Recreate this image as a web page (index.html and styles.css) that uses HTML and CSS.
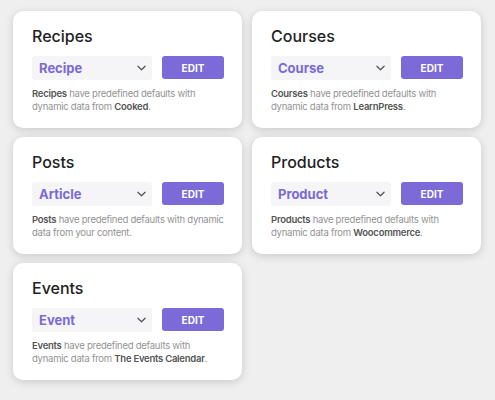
FILE: index.html
```html
<!DOCTYPE html>
<html>
<head>
<meta charset="utf-8">
<link rel="stylesheet" href="styles.css">
</head>
<body>
<div class="grid">
  <div class="card">
    <h2 class="title">Recipes</h2>
    <div class="controls">
      <div class="select"><span>Recipe</span><svg class="chev" viewBox="0 0 10 6" width="9" height="6"><path d="M1 1l4 4 4-4" fill="none" stroke="#555" stroke-width="1.4" stroke-linecap="round" stroke-linejoin="round"/></svg></div>
      <button class="edit">EDIT</button>
    </div>
    <p class="desc"><b>Recipes</b> have predefined defaults with<br>dynamic data from <b>Cooked</b>.</p>
  </div>
  <div class="card">
    <h2 class="title">Courses</h2>
    <div class="controls">
      <div class="select"><span>Course</span><svg class="chev" viewBox="0 0 10 6" width="9" height="6"><path d="M1 1l4 4 4-4" fill="none" stroke="#555" stroke-width="1.4" stroke-linecap="round" stroke-linejoin="round"/></svg></div>
      <button class="edit">EDIT</button>
    </div>
    <p class="desc"><b>Courses</b> have predefined defaults with<br>dynamic data from <b>LearnPress</b>.</p>
  </div>
  <div class="card">
    <h2 class="title">Posts</h2>
    <div class="controls">
      <div class="select"><span>Article</span><svg class="chev" viewBox="0 0 10 6" width="9" height="6"><path d="M1 1l4 4 4-4" fill="none" stroke="#555" stroke-width="1.4" stroke-linecap="round" stroke-linejoin="round"/></svg></div>
      <button class="edit">EDIT</button>
    </div>
    <p class="desc"><b>Posts</b> have predefined defaults with dynamic<br>data from your content.</p>
  </div>
  <div class="card">
    <h2 class="title">Products</h2>
    <div class="controls">
      <div class="select"><span>Product</span><svg class="chev" viewBox="0 0 10 6" width="9" height="6"><path d="M1 1l4 4 4-4" fill="none" stroke="#555" stroke-width="1.4" stroke-linecap="round" stroke-linejoin="round"/></svg></div>
      <button class="edit">EDIT</button>
    </div>
    <p class="desc"><b>Products</b> have predefined defaults with<br>dynamic data from <b>Woocommerce</b>.</p>
  </div>
  <div class="card">
    <h2 class="title">Events</h2>
    <div class="controls">
      <div class="select"><span>Event</span><svg class="chev" viewBox="0 0 10 6" width="9" height="6"><path d="M1 1l4 4 4-4" fill="none" stroke="#555" stroke-width="1.4" stroke-linecap="round" stroke-linejoin="round"/></svg></div>
      <button class="edit">EDIT</button>
    </div>
    <p class="desc"><b>Events</b> have predefined defaults with<br>dynamic data from <b>The Events Calendar</b>.</p>
  </div>
</div>
</body>
</html>
```
FILE: styles.css
```css
html, body {
  margin: 0;
  background: #efefef;
}
body {
  padding: 11px 13px;
  font-family: Inter, "Noto Sans", sans-serif;
}
.grid {
  display: grid;
  grid-template-columns: 229px 229px;
  column-gap: 10px;
  row-gap: 9px;
  align-items: start;
}
.card {
  background: #fff;
  border-radius: 10px;
  box-shadow: 0 2px 8px rgba(0, 0, 0, 0.16);
  padding: 15px 18px 14px 19px;
  height: 117px;
  box-sizing: border-box;
}
.title {
  margin: 0 0 10px;
  font-size: 16px;
  line-height: 20px;
  font-weight: 500;
  color: #222;
}
.controls {
  display: flex;
  gap: 10px;
  align-items: flex-start;
}
.select {
  width: 120px;
  height: 24px;
  box-sizing: border-box;
  background: #f5f5f7;
  border-radius: 3px;
  display: flex;
  align-items: center;
  justify-content: space-between;
  padding: 0 6px 0 7px;
  color: #7b6ad6;
  font-size: 13px;
  font-weight: 700;
}
.chev {
  display: block;
}
.edit {
  width: 62px;
  height: 23px;
  border: 0;
  border-radius: 3px;
  background: #7b6ad8;
  color: #fff;
  font-family: inherit;
  font-size: 10px;
  font-weight: 700;
  padding: 0;
}
.desc {
  margin: 7px 0 0;
  font-size: 9.5px;
  line-height: 13px;
  color: #939393;
  letter-spacing: -0.25px;
  white-space: nowrap;
}
.desc b {
  color: #555;
  font-weight: 600;
}
```
